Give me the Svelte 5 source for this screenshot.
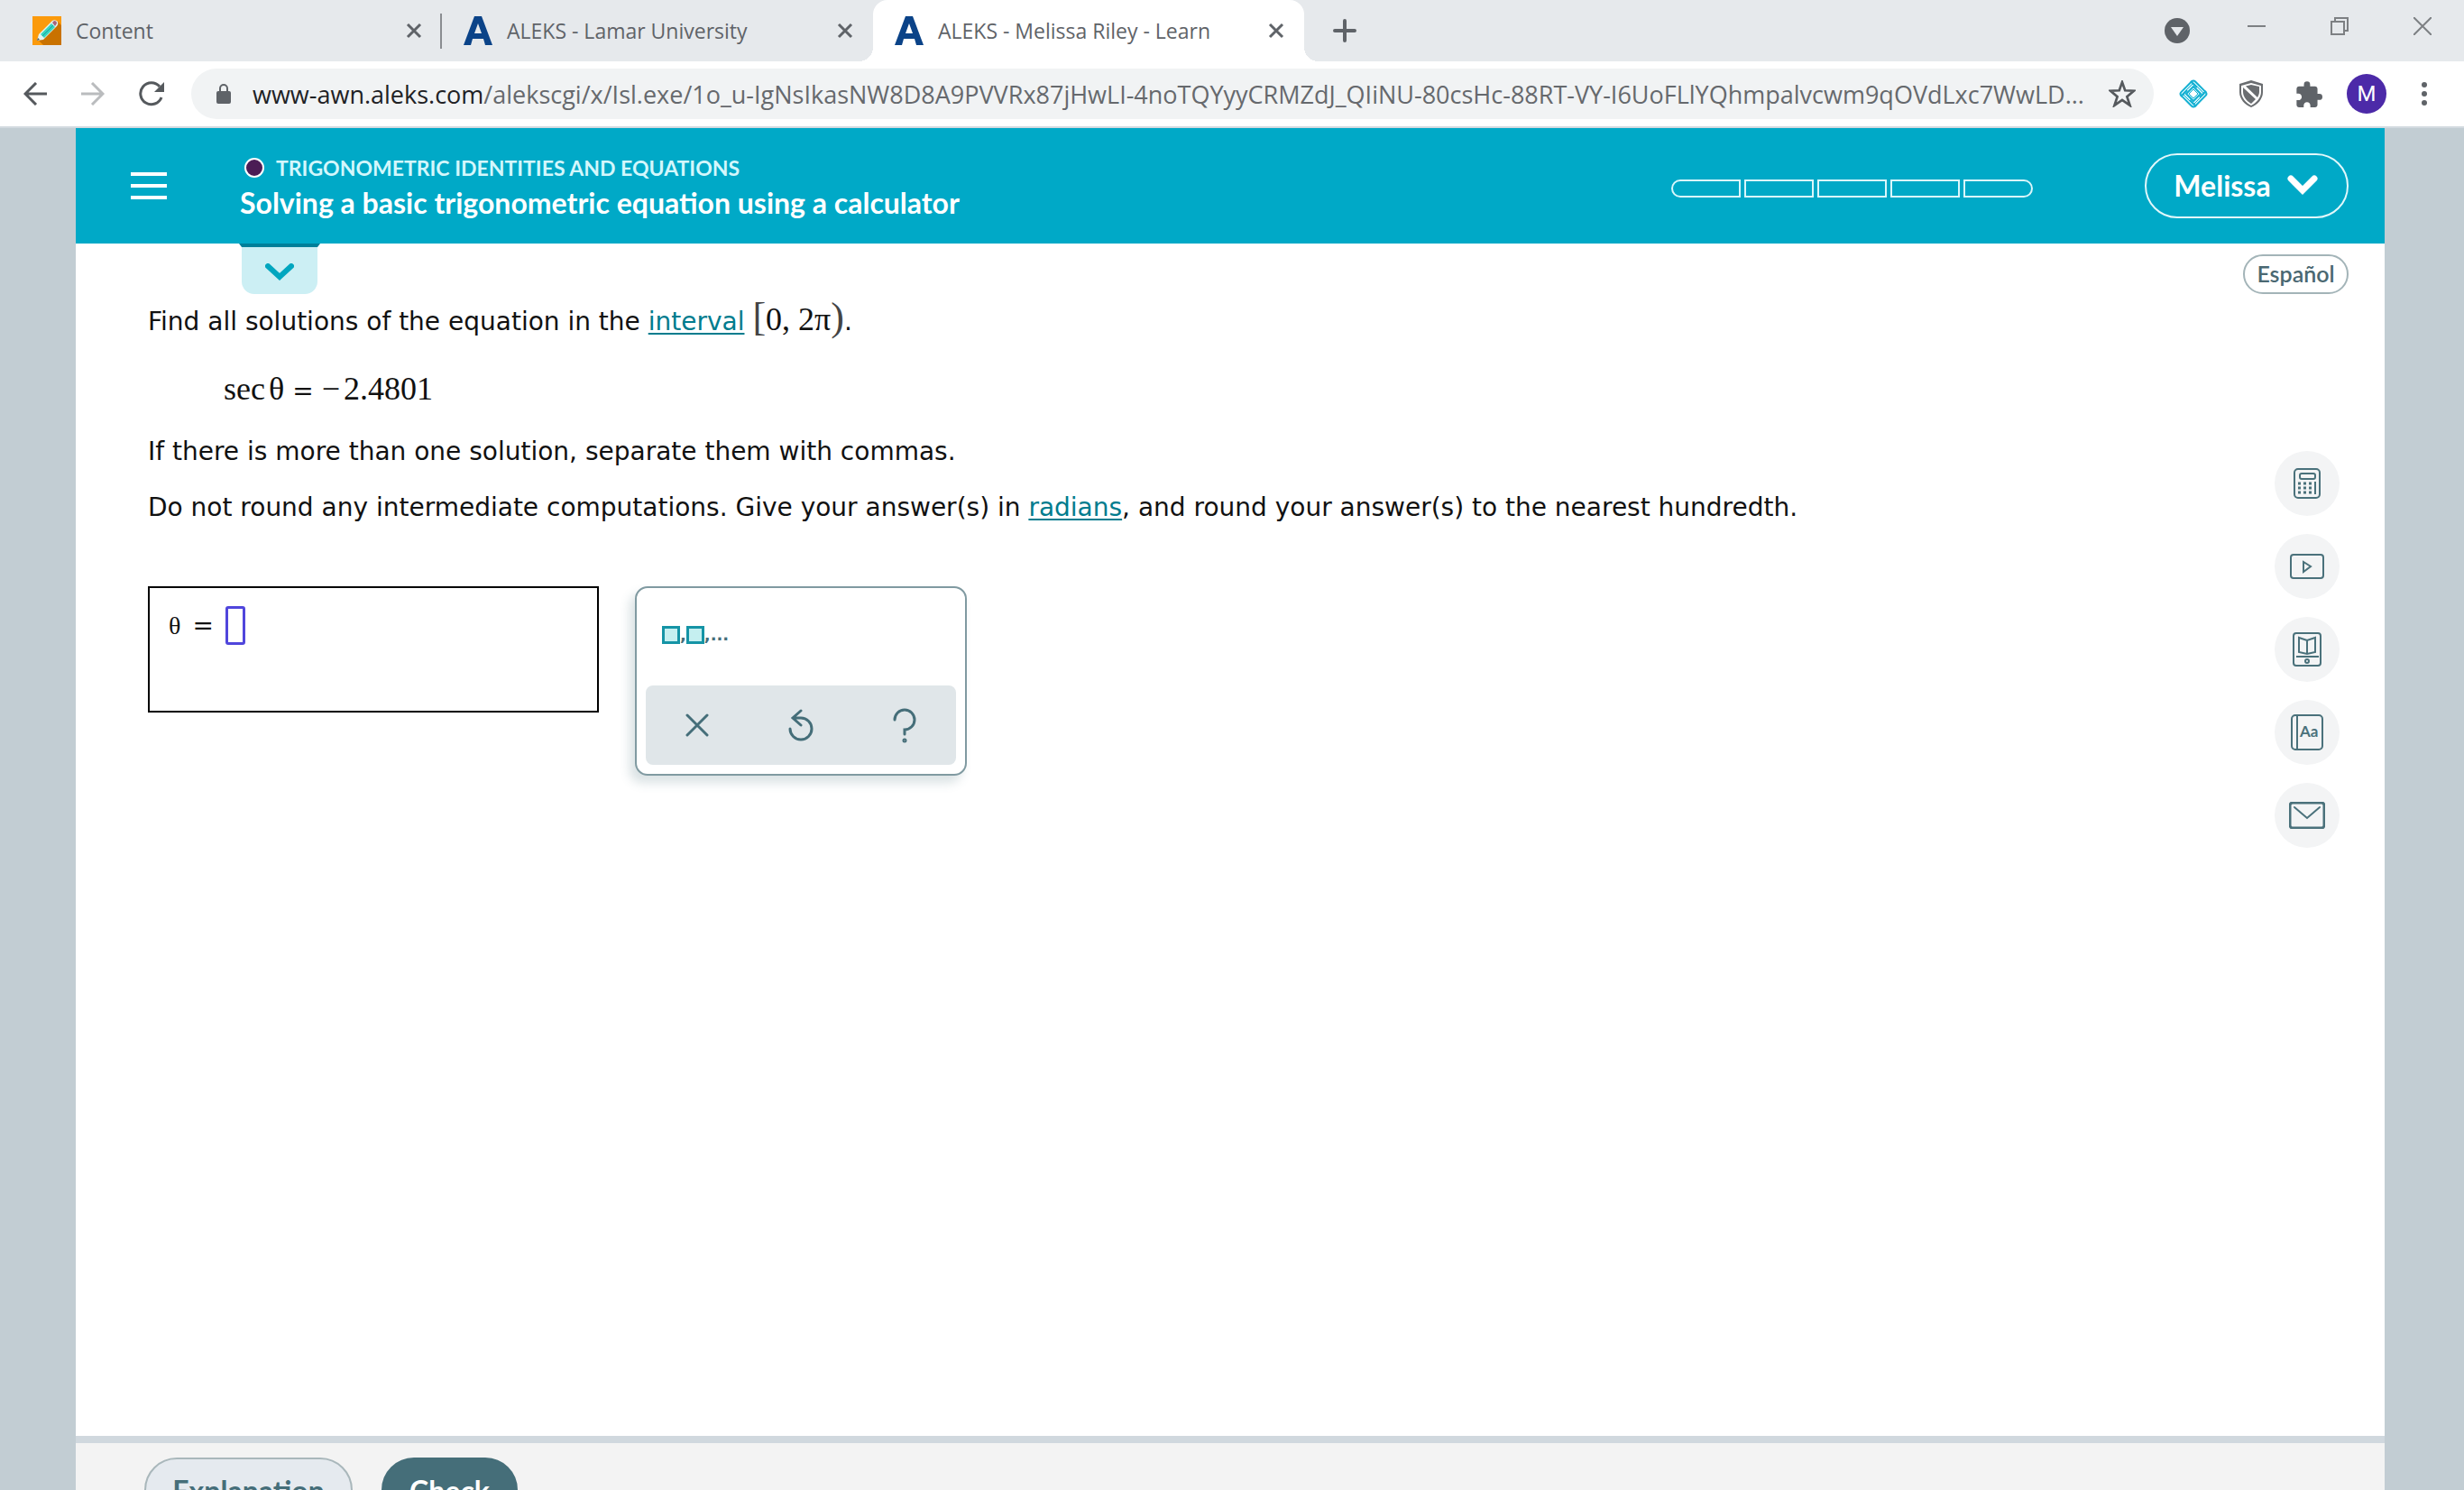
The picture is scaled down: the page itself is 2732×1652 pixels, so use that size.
<script>
	const tabs = [
		{ title: 'Content', icon: 'pencil', active: false },
		{ title: 'ALEKS - Lamar University', icon: 'aleks', active: false },
		{ title: 'ALEKS - Melissa Riley - Learn', icon: 'aleks', active: true }
	];

	const host = 'www-awn.aleks.com';
	const path =
		'/alekscgi/x/Isl.exe/1o_u-IgNsIkasNW8D8A9PVVRx87jHwLI-4noTQYyyCRMZdJ_QIiNU-80csHc-88RT-VY-I6UoFLlYQhmpalvcwm9qOVdLxc7WwLD...';

	const steps = [1, 2, 3, 4, 5];

	let answer = '';
</script>

<svelte:head>
	<title>ALEKS - Melissa Riley - Learn</title>
</svelte:head>

<div class="window">
	<!-- ---------- TABS ---------- -->
	<div class="tabstrip">
		{#each tabs as tab}
			<div class="tab" class:active={tab.active}>
				{#if tab.icon === 'pencil'}
					<svg class="favicon" viewBox="0 0 32 32">
						<rect width="32" height="32" fill="#fb9a0c" />
						<path d="M7 27 L28 6 L32 10 V32 H12 Z" fill="#c97200" />
						<path d="M5 27 L7 20 L22 5 Q25 3 28 6 Q29 9 27 11 L12 26 Z" fill="#e3f3f1" />
						<path d="M9 20 L21 8 L25 12 L13 24 Z" fill="#35d6bd" />
						<path d="M11 22 L23 10" stroke="#1b9aa5" stroke-width="1" />
						<path d="M22 7 L24 5 Q27 5 27 8 L25 11 Z" fill="#a8647c" />
						<path d="M5 27 L6 24 L8 26 Z" fill="#4b5563" />
					</svg>
				{:else}
					<svg class="favicon" viewBox="0 0 32 32">
						<path d="M12 0 H20 L32 32 H24 L22 25 H10 L8 32 H0 Z M16 8 L12 19 H20 Z" fill="#0b4388" fill-rule="evenodd" />
					</svg>
				{/if}
				<span class="tab_title">{tab.title}</span>
				<button class="plain" aria-label="Close tab">
					<svg width="18" height="18" viewBox="0 0 18 18">
						<path d="M2 2 L16 16 M16 2 L2 16" stroke="#5f6368" stroke-width="3" />
					</svg>
				</button>
			</div>
		{/each}
		<button class="plain new_tab" aria-label="New tab">
			<svg width="26" height="26" viewBox="0 0 26 26">
				<path d="M13 2 V24 M2 13 H24" stroke="#5f6368" stroke-width="4" stroke-linecap="round" />
			</svg>
		</button>
		<div class="strip_end">
			<button class="plain" aria-label="Search tabs">
				<svg width="28" height="28" viewBox="0 0 28 28">
					<circle cx="14" cy="14" r="14" fill="#5f6368" />
					<path d="M7 10 H21 L14 20 Z" fill="#e6e9ec" />
				</svg>
			</button>
			<div class="win_controls">
				<button class="plain" aria-label="Minimize">
					<svg width="20" height="20" viewBox="0 0 20 20"><path d="M0 10 H20" stroke="#7d8083" stroke-width="2" /></svg>
				</button>
				<button class="plain" aria-label="Restore">
					<svg width="20" height="20" viewBox="0 0 20 20" fill="none" stroke="#7d8083" stroke-width="2">
						<path d="M1 5 H15 V19 H1 Z M5 5 V1 H19 V15 H15" />
					</svg>
				</button>
				<button class="plain" aria-label="Close">
					<svg width="20" height="20" viewBox="0 0 20 20"><path d="M0 0 L20 20 M20 0 L0 20" stroke="#7d8083" stroke-width="2" /></svg>
				</button>
			</div>
		</div>
	</div>

	<!-- ---------- TOOLBAR ---------- -->
	<div class="toolbar">
		<div class="nav">
			<button class="plain" aria-label="Back">
				<svg width="26" height="26" viewBox="0 0 26 26" fill="none" stroke="#55595d" stroke-width="3">
					<path d="M26 13 H2 M14 1 L2 13 L14 25" />
				</svg>
			</button>
			<button class="plain" aria-label="Forward">
				<svg width="26" height="26" viewBox="0 0 26 26" fill="none" stroke="#babcbe" stroke-width="3">
					<path d="M0 13 H24 M12 1 L24 13 L12 25" />
				</svg>
			</button>
			<button class="plain" aria-label="Reload">
				<svg width="28" height="28" viewBox="0 0 28 28">
					<path d="M23 6 A12 12 0 1 0 25 18" fill="none" stroke="#55595d" stroke-width="3" />
					<path d="M28 1 V12 H17 Z" fill="#55595d" />
				</svg>
			</button>
		</div>
		<div class="omnibox">
			<svg width="16" height="22" viewBox="0 0 16 22">
				<rect y="8" width="16" height="14" rx="2" fill="#5f6368" />
				<path d="M4 9 V5 A4 4 0 0 1 12 5 V9" fill="none" stroke="#5f6368" stroke-width="2" />
			</svg>
			<span class="url"><b>{host}</b>{path}</span>
			<button class="plain" aria-label="Bookmark this page">
				<svg width="30" height="30" viewBox="0 0 28 28">
					<path d="M14 2 L17 10.500 L26 11 L19 17 L22 26 L14 20.500 L6 26 L9 17 L2 11 L11 10.500 Z" fill="none" stroke="#55595d" stroke-width="2.5" />
				</svg>
			</button>
		</div>
		<div class="extensions">
			<button class="plain" aria-label="Diamond extension">
				<svg width="32" height="32" viewBox="0 0 32 32" fill="none" stroke="#14b0d2" stroke-width="2">
					<rect x="5" y="5" width="22" height="22" rx="3" transform="rotate(45 16 16)" fill="#d8f6fb" />
					<path d="M16 4 L28 16 L16 28 L4 16 Z" stroke-width="1" />
					<path d="M16 8 L24 16 L16 24 L8 16 Z" />
					<path d="M16 11 L21 16 L16 21 L11 16 Z" fill="#fff" stroke-width="1" />
					<path d="M13 2 L20 9 M30 13 L23 20 M19 30 L12 23 M2 19 L9 12" />
				</svg>
			</button>
			<button class="plain" aria-label="Shield extension">
				<svg width="28" height="32" viewBox="0 0 28 32">
					<path d="M14 1 L27 5 V14 C27 22 21 28 14 31 C7 28 1 22 1 14 V5 Z" fill="#6a6d70" />
					<path d="M14 4 L25 7 V14 C25 20 20 26 14 29 C8 26 3 20 3 14 V7 Z" fill="#fff" />
					<path d="M8 7.500 L14 6 L23 8 V14 C23 16 22 18 21 20 Z" fill="#6a6d70" />
					<path d="M5 9 L19 22 L14 27 C9 24 5 19 5 14 Z" fill="#6a6d70" />
				</svg>
			</button>
			<button class="plain" aria-label="Extensions">
				<svg width="30" height="30" viewBox="1 0 22 22">
					<path d="M20.5 11H19V7c0-1.1-.9-2-2-2h-4V3.500a2.500 2.500 0 0 0-5 0V5H4c-1.100 0-2 .9-2 2v3.800h1.500c1.500 0 2.700 1.200 2.700 2.700S5 16.200 3.500 16.200H2V20c0 1.100.9 2 2 2h3.800v-1.500c0-1.500 1.200-2.700 2.700-2.700s2.700 1.200 2.700 2.700V22H17c1.100 0 2-.9 2-2v-4h1.500a2.500 2.500 0 0 0 0-5z" fill="#5f6368" />
				</svg>
			</button>
			<button class="plain avatar" aria-label="Profile">M</button>
			<button class="plain" aria-label="Browser menu">
				<svg width="8" height="28" viewBox="0 0 8 28" fill="#5f6368">
					<circle cx="4" cy="4" r="3" /><circle cx="4" cy="14" r="3" /><circle cx="4" cy="24" r="3" />
				</svg>
			</button>
		</div>
	</div>

	<!-- ---------- PAGE ---------- -->
	<div class="page">
		<header>
			<button class="plain" aria-label="Menu">
				<svg width="40" height="30" viewBox="0 0 40 30">
					<path d="M0 2 H40 M0 15 H40 M0 28 H40" stroke="#fff" stroke-width="4" />
				</svg>
			</button>
			<div class="heading">
				<div class="topic"><span class="dot"></span>TRIGONOMETRIC IDENTITIES AND EQUATIONS</div>
				<h1>Solving a basic trigonometric equation using a calculator</h1>
			</div>
			<div class="progress">
				{#each steps as step}
					<span class="step"></span>
				{/each}
			</div>
			<button class="user">
				Melissa
				<svg width="34" height="22" viewBox="0 0 34 22">
					<path d="M4 4 L17 17 L30 4" fill="none" stroke="#fff" stroke-width="7" stroke-linecap="round" />
				</svg>
			</button>
		</header>

		<div class="work">
			<main>
				<button class="plain drawer" aria-label="Show more">
					<svg width="32" height="20" viewBox="0 0 32 20">
						<path d="M3 3 L16 15 L29 3" fill="none" stroke="#00a6bf" stroke-width="6" stroke-linecap="round" />
					</svg>
				</button>
				<div class="problem">
					<p>
						Find all solutions of the equation in the <a href="#interval">interval</a>
						<span class="math"><span class="fence">[</span>0, 2π<span class="fence">)</span></span>.
					</p>
					<p class="math equation">sec<i></i>θ <span class="equals">=</span> −<i></i>2.4801</p>
					<p>If there is more than one solution, separate them with commas.</p>
					<p>
						Do not round any intermediate computations. Give your answer(s) in <a href="#radians">radians</a>, and
						round your answer(s) to the nearest hundredth.
					</p>
					<div class="answer_row">
						<div class="answer">
							<label for="theta">θ</label>
							<span class="equals">=</span>
							<input id="theta" type="text" bind:value={answer} />
						</div>
						<div class="palette">
							<button class="plain list" aria-label="List of answers">
								<span class="slot"></span><span>,</span><span class="slot"></span><span>,...</span>
							</button>
							<div class="tools">
								<button class="plain" aria-label="Clear">
									<svg width="26" height="26" viewBox="0 0 26 26">
										<path d="M2 2 L24 24 M24 2 L2 24" stroke="#456e79" stroke-width="3" stroke-linecap="round" />
									</svg>
								</button>
								<button class="plain" aria-label="Undo">
									<svg width="28" height="36" viewBox="0 0 28 36" fill="none" stroke="#456e79" stroke-width="3" stroke-linecap="round">
										<path d="M2 22 A12 12 0 1 0 14 10 H6 M14 2 L5 10 L14 18" />
									</svg>
								</button>
								<button class="plain" aria-label="Help">
									<svg width="26" height="40" viewBox="0 0 26 40" fill="none" stroke="#456e79" stroke-width="3" stroke-linecap="round">
										<path d="M2 14 A11 11 0 1 1 13 25 V30" />
										<circle cx="13" cy="37" r="1" />
									</svg>
								</button>
							</div>
						</div>
					</div>
				</div>
			</main>

			<aside>
				<button class="language">Español</button>
				<div class="rail">
					<button class="plain" aria-label="Calculator">
						<svg width="30" height="34" viewBox="0 0 30 34" fill="none" stroke="#4a717b" stroke-width="2">
							<rect x="1" y="1" width="28" height="32" rx="4" />
							<rect x="7" y="6" width="17" height="6" rx="2" />
							<path d="M5 17 H21 M5 22 H21 M5 27 H21" stroke-width="3" stroke-dasharray="3 3" />
							<path d="M24 15 V29" />
						</svg>
					</button>
					<button class="plain" aria-label="Video">
						<svg width="38" height="28" viewBox="0 0 38 28" fill="none" stroke="#4a717b" stroke-width="2">
							<rect x="1" y="1" width="36" height="26" rx="3" />
							<path d="M15 9 V20 L23 14 Z" />
						</svg>
					</button>
					<button class="plain" aria-label="Textbook">
						<svg width="32" height="38" viewBox="0 0 32 38" fill="none" stroke="#4a717b" stroke-width="2">
							<rect x="1" y="1" width="30" height="36" rx="3" />
							<path d="M16 9 L7 6 V22 L16 24 L25 22 V6 Z V24 M4 27 H29" />
							<circle cx="16" cy="32" r="2" />
						</svg>
					</button>
					<button class="plain" aria-label="Dictionary">
						<svg width="36" height="40" viewBox="0 0 36 40" fill="none" stroke="#4a717b" stroke-width="2">
							<rect x="1" y="1" width="34" height="38" rx="4" />
							<path d="M7 1 V39" />
							<text x="10" y="25" class="aa">Aa</text>
						</svg>
					</button>
					<button class="plain" aria-label="Messages">
						<svg width="40" height="30" viewBox="0 0 40 30" fill="none" stroke="#4a717b" stroke-width="3">
							<rect x="1" y="1" width="38" height="28" rx="3" />
							<path d="M6 6 L20 18 L34 6" stroke-width="2" stroke-linecap="round" />
						</svg>
					</button>
				</div>
			</aside>
		</div>

		<footer>
			<button class="explanation">Explanation</button>
			<button class="check">Check</button>
		</footer>
	</div>
</div>

<style>
	:global(body) {
		margin: 0;
		overflow: hidden;
	}

	.window {
		display: flex;
		flex-direction: column;
		height: 100vh;
		overflow: hidden;
		background-color: #c2cdd3;
		font-family: 'Open Sans', 'Noto Sans', sans-serif;
	}

	.window * {
		box-sizing: border-box;
	}

	svg {
		display: block;
		flex: none;
	}

	button {
		font-family: inherit;
		cursor: pointer;
	}

	.plain {
		display: flex;
		align-items: center;
		justify-content: center;
		flex: none;
		padding: 0;
		border: none;
		background: none;
	}

	/* ---------- TABS ---------- */

	.tabstrip {
		display: flex;
		flex: none;
		height: 68px;
		padding-left: 12px;
		background-color: #e6e9ec;
	}

	.tab {
		display: flex;
		align-items: center;
		gap: 16px;
		width: 478px;
		padding: 0 22px 0 24px;
		font-size: 23px;
		color: #5f6368;
		position: relative;
	}

	.tab:first-child::after {
		content: '';
		position: absolute;
		right: 0;
		top: 15px;
		bottom: 14px;
		width: 2px;
		background-color: #8a8d91;
	}

	.tab.active {
		background-color: white;
		border-radius: 16px 16px 0 0;
	}

	/* curved feet of the active tab */
	.tab.active::before,
	.tab.active::after {
		content: '';
		position: absolute;
		bottom: 0;
		width: 16px;
		height: 16px;
	}

	.tab.active::before {
		right: 100%;
		background: radial-gradient(circle at 0 0, transparent 16px, white 16px);
	}

	.tab.active::after {
		left: 100%;
		background: radial-gradient(circle at 100% 0, transparent 16px, white 16px);
	}

	.favicon {
		width: 32px;
		height: 32px;
	}

	.tab_title {
		flex: 1;
		white-space: nowrap;
	}

	.new_tab {
		margin-left: 32px;
	}

	.strip_end {
		display: flex;
		align-items: center;
		gap: 64px;
		margin-left: auto;
		padding-right: 36px;
	}

	.win_controls {
		display: flex;
		gap: 72px;
		padding-bottom: 10px;
	}

	/* ---------- TOOLBAR ---------- */

	.toolbar {
		display: flex;
		align-items: center;
		flex: none;
		height: 74px;
		padding: 0 22px 0 26px;
		border-bottom: 2px solid #d3dae0;
		background-color: white;
	}

	.nav {
		display: flex;
		gap: 38px;
	}

	.omnibox {
		display: flex;
		align-items: center;
		flex: 1;
		min-width: 0;
		height: 56px;
		margin: 0 22px 0 30px;
		padding: 0 20px 0 28px;
		border-radius: 28px;
		background-color: #f1f3f4;
	}

	.url {
		flex: 1;
		min-width: 0;
		margin: 0 20px 0 24px;
		overflow: hidden;
		white-space: nowrap;
		font-size: 27px;
		color: #66696d;
	}

	.url b {
		font-weight: normal;
		color: #202124;
	}

	.extensions {
		display: flex;
		align-items: center;
		gap: 20px;
	}

	.extensions button {
		width: 44px;
		height: 44px;
	}

	.avatar {
		border-radius: 50%;
		background-color: #4c2aa8;
		font-family: Roboto, sans-serif;
		font-size: 24px;
		color: white;
	}

	/* ---------- HEADER ---------- */

	.page {
		display: flex;
		flex-direction: column;
		flex: 1;
		min-height: 0;
		margin: 0 88px 0 84px;
		background-color: white;
	}

	header {
		display: flex;
		align-items: center;
		flex: none;
		height: 128px;
		padding: 0 40px 0 61px;
		background-color: #00a9c7;
		font-family: Lato, sans-serif;
		color: white;
	}

	.heading {
		flex: 1;
		margin-left: 81px;
	}

	.topic {
		display: flex;
		align-items: center;
		gap: 13px;
		padding-left: 5px;
		font-size: 23px;
		line-height: 38px;
		font-weight: bold;
		color: #d3f7fc;
	}

	.dot {
		width: 22px;
		height: 22px;
		border: 2px solid white;
		border-radius: 50%;
		background-color: #4b1c55;
	}

	h1 {
		margin: 0;
		font-size: 32px;
		line-height: 40px;
		font-weight: bold;
	}

	.progress {
		display: flex;
		gap: 4px;
		margin-right: 124px;
		padding-top: 6px;
	}

	.step {
		width: 77px;
		height: 20px;
		border: 2px solid #d9f6fb;
	}

	.step:first-child {
		border-radius: 10px 0 0 10px;
	}

	.step:last-child {
		border-radius: 0 10px 10px 0;
	}

	.user {
		display: flex;
		align-items: center;
		justify-content: center;
		gap: 18px;
		width: 226px;
		height: 72px;
		padding: 0 2px 2px 0;
		border: 2px solid #e2f8fb;
		border-radius: 36px;
		background: none;
		font-size: 32px;
		font-weight: bold;
		color: white;
	}

	/* ---------- PROBLEM ---------- */

	.work {
		display: flex;
		flex: 1;
		min-height: 0;
	}

	main {
		flex: 1;
		min-width: 0;
	}

	.drawer {
		width: 84px;
		height: 56px;
		margin-left: 184px;
		padding-top: 8px;
		border-radius: 0 0 14px 14px;
		background-color: #cceff4;
		position: relative;
	}

	.drawer::before {
		content: '';
		position: absolute;
		top: 0;
		left: -3px;
		right: -3px;
		border: 3px solid transparent;
		border-top: 4px solid #007f99;
		border-bottom: none;
	}

	.problem {
		padding: 0 80px;
		font-family: 'DejaVu Sans', sans-serif;
		font-size: 28px;
		color: #111;
	}

	p {
		margin: 0;
		line-height: 62px;
	}

	a {
		color: #007c8e;
		text-underline-offset: 3px;
	}

	.math {
		font-family: 'Liberation Serif', serif;
		font-size: 36px;
		line-height: 0;
	}

	.fence {
		font-size: 44px;
		color: #444;
	}

	.equation {
		padding: 4px 0 0 84px;
		line-height: 78px;
	}

	.equation i {
		padding-left: 4px;
	}

	.equals {
		font-family: 'DejaVu Sans', sans-serif;
		font-size: 28px;
	}

	.equation .equals {
		line-height: 0;
	}

	.answer_row {
		display: flex;
		align-items: flex-start;
		gap: 40px;
		margin-top: 56px;
	}

	.answer {
		display: flex;
		align-items: baseline;
		gap: 13px;
		width: 500px;
		height: 140px;
		padding: 20px 21px;
		border: 2px solid black;
		font-family: 'Liberation Serif', serif;
		font-size: 28px;
		line-height: 43px;
	}

	.answer input {
		align-self: flex-start;
		width: 22px;
		height: 43px;
		padding: 0;
		border: 3px solid #5046dc;
		border-radius: 3px;
		outline: none;
		font: inherit;
	}

	.palette {
		width: 368px;
		padding: 42px 10px 10px;
		border: 2px solid #809aa1;
		border-radius: 14px;
		box-shadow: -6px 8px 12px rgba(69, 110, 121, 0.2);
		background-color: white;
	}

	.list {
		align-items: flex-end;
		margin: 0 0 46px 18px;
		font-size: 18px;
		line-height: 20px;
		font-weight: bold;
		color: #456e79;
	}

	.slot {
		width: 20px;
		height: 20px;
		border: 3px solid #1594a6;
		background-color: #c5eff0;
	}

	.tools {
		display: flex;
		align-items: center;
		justify-content: space-around;
		height: 88px;
		border-radius: 8px;
		background-color: #e0e6e9;
	}

	/* ---------- RIGHT SIDE ---------- */

	aside {
		display: flex;
		flex-direction: column;
		align-items: flex-end;
		padding: 12px 40px 0 0;
	}

	.language {
		width: 117px;
		height: 44px;
		padding: 0 0 2px;
		border: 2px solid #a3b4b8;
		border-radius: 22px;
		background: none;
		font-family: Lato, sans-serif;
		font-size: 25px;
		font-weight: 600;
		color: #4a6872;
	}

	.rail {
		display: flex;
		flex-direction: column;
		gap: 20px;
		margin: 174px 10px 0 0;
	}

	.rail button {
		width: 72px;
		height: 72px;
		border-radius: 50%;
		background-color: #f3f4f5;
	}

	.aa {
		font-family: Lato, sans-serif;
		font-size: 17px;
		font-weight: bold;
		fill: #4a717b;
		stroke: none;
	}

	/* ---------- FOOTER ---------- */

	footer {
		display: flex;
		align-items: flex-start;
		flex: none;
		gap: 32px;
		height: 60px;
		padding: 16px 76px 0;
		border-top: 8px solid #d0d8de;
		background-color: #f3f3f3;
		font-family: Lato, sans-serif;
	}

	footer button {
		flex: none;
		height: 72px;
		padding: 0;
		border: 2px solid #a9b7bb;
		border-radius: 36px;
		font-size: 32px;
		font-weight: bold;
	}

	.explanation {
		width: 231px;
		background-color: #e5eaef;
		color: #456e79;
	}

	.check {
		width: 151px;
		border-color: #456e79;
		background-color: #456e79;
		color: white;
	}
</style>
